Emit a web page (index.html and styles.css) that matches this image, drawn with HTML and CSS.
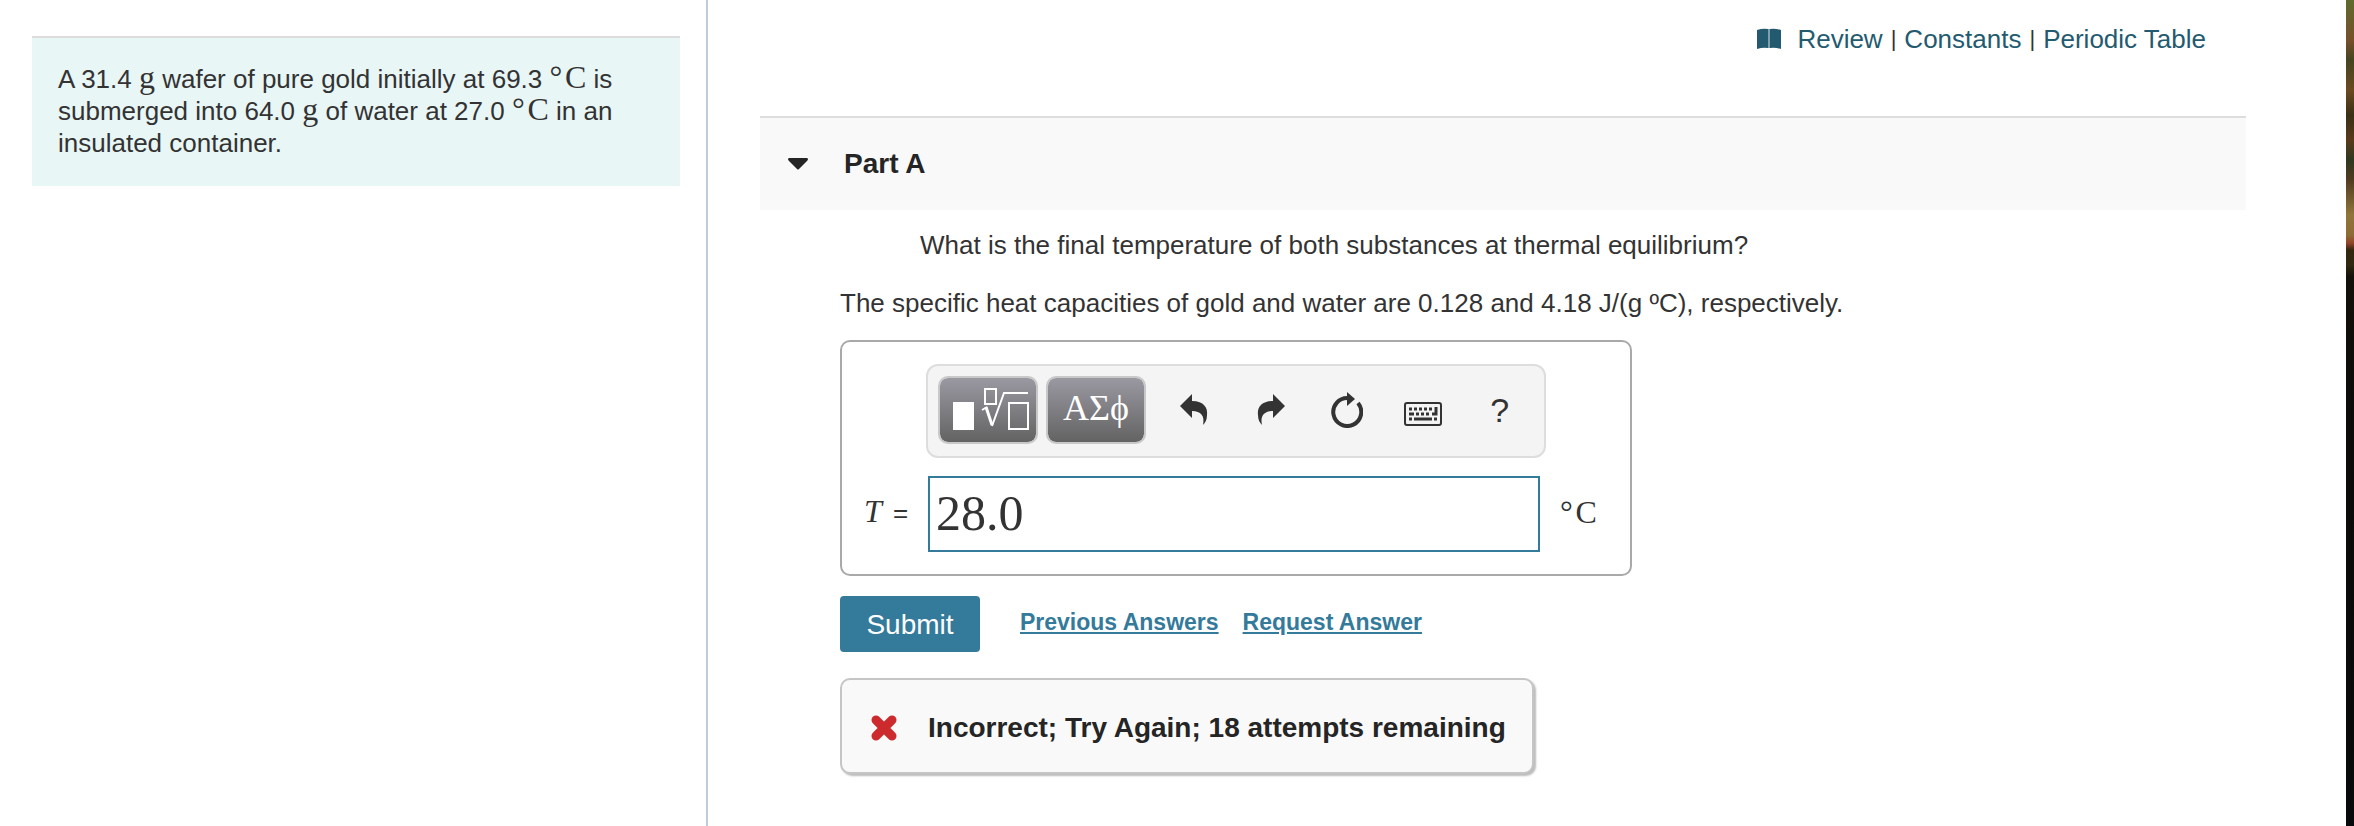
FILE: index.html
```
<!DOCTYPE html>
<html lang="en">
<head>
    <meta charset="UTF-8">
    <meta name="viewport" content="width=device-width, initial-scale=1.0">
    <title>Part A</title>
    <link rel="stylesheet" href="styles.css">
</head>
<body>
    <div class="page">
        <aside class="sidebar">
            <div class="intro">
                A 31.4 <span class="math">g</span> wafer of pure gold initially at 69.3 <span class="math">°&hairsp;C</span> is submerged into 64.0 <span class="math">g</span> of water at 27.0 <span class="math">°&hairsp;C</span> in an insulated container.
            </div>
        </aside>

        <main class="content">
            <nav class="resources">
                <svg class="book" width="24" height="22" viewBox="0 0 24 22" aria-hidden="true">
                    <path d="M0 2Q6 0 11 1V20Q6 19 0 21Z M13 1Q18 0 24 2V21Q18 19 13 20Z" fill="#235a70"/>
                    <path d="M12 1V20" stroke="#7d9fae" stroke-width="2"/>
                </svg>
                <a href="#">Review</a><span class="bar">|</span><a href="#">Constants</a><span class="bar">|</span><a href="#">Periodic Table</a>
            </nav>

            <header class="part-header">
                <button type="button" class="toggle" aria-label="Collapse Part A">
                    <svg width="22" height="12" viewBox="0 0 22 12"><path d="M2 0H20Q22 1 20 3L12 11Q11 12 10 11L2 3Q0 1 2 0Z" fill="#252525"/></svg>
                </button>
                <h2>Part A</h2>
            </header>

            <section class="part-body">
                <p class="question">What is the final temperature of both substances at thermal equilibrium?</p>
                <p>The specific heat capacities of gold and water are 0.128 and 4.18 J/(g ºC), respectively.</p>

                <form id="answer-form">
                    <div class="answer-box">
                        <div class="toolbar">
                            <button type="button" class="palette" aria-label="Templates">
                                <svg width="96" height="64" viewBox="0 0 96 64" fill="none" stroke="#fff">
                                    <rect x="13" y="24" width="21" height="28" fill="#fff" stroke="none"/>
                                    <rect x="45" y="11" width="11" height="15" stroke-width="2"/>
                                    <path d="M42 32L47 29" stroke-width="2"/>
                                    <path d="M46 29L52 47" stroke-width="3"/>
                                    <path d="M52 48L64 15H88" stroke-width="2"/>
                                    <rect x="69" y="25" width="19" height="26" stroke-width="2"/>
                                </svg>
                            </button>
                            <button type="button" class="palette greek" aria-label="Symbols">ΑΣϕ</button>
                            <div class="tools">
                                <button type="button" aria-label="Undo">
                                    <svg width="28" height="32" viewBox="0 0 28 32"><path d="M0 12L12 0V7C24 7 28 14 27 21C27 26 25 29 23 31C25 22 21 17 12 17V24Z" fill="#333"/></svg>
                                </button>
                                <button type="button" aria-label="Redo">
                                    <svg width="28" height="32" viewBox="0 0 28 32"><path d="M28 12L16 0V7C4 7 0 14 1 21C1 26 3 29 5 31C3 22 7 17 16 17V24Z" fill="#333"/></svg>
                                </button>
                                <button type="button" aria-label="Reset">
                                    <svg width="32" height="36" viewBox="0 0 32 36"><path d="M17 6A14 14 0 1 0 27 11" fill="none" stroke="#333" stroke-width="4"/><path d="M16 0L24 7L16 14Z" fill="#333"/></svg>
                                </button>
                                <button type="button" aria-label="Keyboard">
                                    <svg class="keyboard" width="38" height="24" viewBox="0 0 38 24" fill="none" stroke="#333" stroke-width="3">
                                        <rect x="1" y="1" width="36" height="22" rx="2" stroke-width="2"/>
                                        <path d="M5 7H8M10 7H13M15 7H18M20 7H23M25 7H28"/>
                                        <path d="M5 12H10M12 12H15M17 12H20M22 12H25M28 12H32V5"/>
                                        <path d="M5 17H8M10 17H28M30 17H33"/>
                                    </svg>
                                </button>
                                <button type="button" class="help" aria-label="Help">?</button>
                            </div>
                        </div>
                        <label for="answer"><i class="math">T</i> =</label>
                        <input type="text" id="answer" value="28.0">
                        <span class="unit math">°&hairsp;C</span>
                    </div>

                    <div class="actions">
                        <button type="submit" class="submit">Submit</button>
                        <a href="#">Previous Answers</a>
                        <a href="#">Request Answer</a>
                    </div>
                </form>

                <div class="feedback">
                    <svg width="28" height="28" viewBox="0 0 28 28" aria-hidden="true"><path d="M6 6L22 22M22 6L6 22" stroke="#cc2a2c" stroke-width="9" stroke-linecap="round"/></svg>
                    <strong>Incorrect; Try Again; 18 attempts remaining</strong>
                </div>
            </section>
        </main>
    </div>
</body>
</html>
```
FILE: styles.css
```
* {
    box-sizing: border-box;
}
body {
    font-family: "Liberation Sans", Arial, sans-serif;
    font-size: 26px;
    line-height: 32px;
    margin: 0;
    padding-right: 8px;
    color: #333;
    /* desktop showing past the window edge */
    background: linear-gradient(#5f6a2c 0, #76502a 40px, #45451f 60px, #6b4a20 90px, #3a3015 115px, #593a1b 140px, #303820 160px, #503c20 180px, #90753a 215px, #8c6c35 235px, #934428 243px, #33260f 250px, #302810 265px, #14100a 277px, #0d0c0a 400px, #08090a 826px) right top / 8px 100% no-repeat;
}
button {
    font-family: inherit;
    padding: 0;
    border: none;
    background: none;
    color: inherit;
    cursor: pointer;
}
svg {
    display: block;
}
.page {
    display: flex;
    min-height: 100vh;
    background: white;
}
.sidebar {
    flex: 0 0 708px;
    padding: 36px 26px 36px 32px;
    border-right: 2px solid #bfcddb;
}
.intro {
    padding: 25px 26px 27px;
    border-top: 2px solid #ddd;
    background-color: #e8f6f6;
}
.math {
    font-family: "Liberation Serif", "Times New Roman", serif;
    font-size: 32px;
    line-height: 28px;
}
.content {
    flex: 1;
    padding: 0 100px 0 52px;
}
.resources {
    display: flex;
    justify-content: flex-end;
    align-items: center;
    height: 116px;
    padding: 0 40px 38px 0;
}
.resources a {
    color: #235a70;
    text-decoration: none;
}
.book {
    margin-right: 16px;
}
.bar {
    margin: 0 8px;
    font-size: 22px;
}
.part-header {
    display: flex;
    align-items: center;
    height: 94px;
    padding-left: 27px;
    border-top: 2px solid #ddd;
    background-color: #f9f9f9;
}
.part-header h2 {
    margin: 0 0 0 35px;
    font-size: 28px;
    color: #252525;
}
.part-body {
    padding: 19px 0 0 80px;
}
.part-body p {
    margin: 0 0 26px;
}
.part-body .question {
    padding-left: 80px;
}
.answer-box {
    display: inline-grid;
    grid-template-columns: 62px 620px auto;
    row-gap: 18px;
    align-items: center;
    width: 792px;
    margin-top: -5px;
    padding: 22px;
    border: 2px solid #a9a9a9;
    border-radius: 10px;
    vertical-align: top;
}
.toolbar {
    grid-column: 2;
    display: flex;
    align-items: center;
    gap: 8px;
    height: 94px;
    padding: 0 6px 2px 10px;
    border: 2px solid #ddd;
    border-radius: 12px;
    background-color: #f4f4f4;
}
.palette {
    width: 100px;
    height: 68px;
    border: 2px solid #c8c8c8;
    border-radius: 10px;
    background: linear-gradient(#9a99a2, #636363) padding-box;
    color: white;
}
.greek {
    padding-bottom: 4px;
    font-family: "Liberation Serif", "Times New Roman", serif;
    font-size: 36px;
}
.tools {
    flex: 1;
    display: flex;
    padding-left: 2px;
}
.tools button {
    flex: 1;
    display: flex;
    justify-content: center;
    align-items: center;
    height: 68px;
}
.keyboard {
    margin-top: 8px;
}
.tools .help {
    font-size: 34px;
}
.answer-box label {
    grid-column: 1;
    padding-bottom: 2px;
}
.answer-box label i {
    margin-right: 4px;
}
.answer-box input {
    height: 76px;
    margin: 0 6px 0 2px;
    padding: 0 6px 2px;
    border: 2px solid #337a9b;
    font-family: "Liberation Serif", "Times New Roman", serif;
    font-size: 50px;
    color: #333;
}
.unit {
    padding: 0 0 4px 14px;
}
.actions {
    display: flex;
    align-items: center;
    gap: 24px;
    margin: 20px 0 26px;
}
.submit {
    width: 140px;
    height: 56px;
    margin-right: 16px;
    padding-top: 2px;
    border-radius: 4px;
    background-color: #337a9b;
    color: white;
    font-size: 28px;
}
.actions a {
    padding-bottom: 4px;
    font-size: 23px;
    font-weight: bold;
    color: #337a9b;
}
.feedback {
    display: inline-flex;
    align-items: center;
    gap: 30px;
    height: 96px;
    padding: 4px 26px 0 28px;
    border: 2px solid #c5c5c5;
    border-radius: 10px;
    background-color: #f9f9f9;
    box-shadow: 2px 2px 2px #bbb;
    font-size: 28px;
    color: #252525;
}
```
